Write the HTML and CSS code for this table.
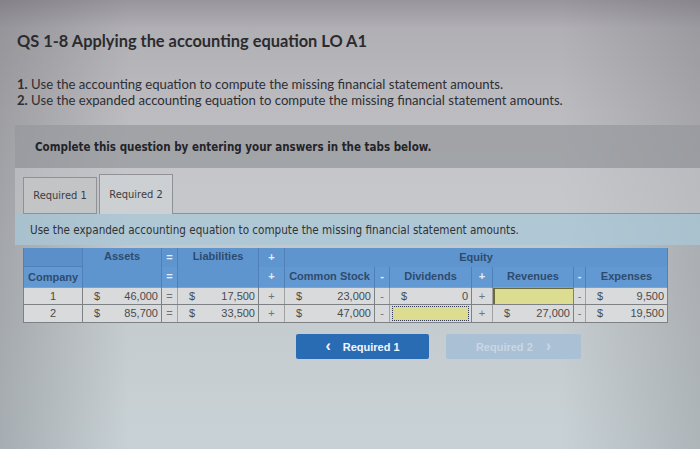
FILE: index.html
```html
<!DOCTYPE html>
<html>
<head>
<meta charset="utf-8">
<link rel="stylesheet" href="styles.css">
</head>
<body>
<div class="page">
  <h1 class="title">QS 1-8 Applying the accounting equation LO A1</h1>
  <div class="tasks">
    <div class="task"><b>1.</b> Use the accounting equation to compute the missing financial statement amounts.</div>
    <div class="task"><b>2.</b> Use the expanded accounting equation to compute the missing financial statement amounts.</div>
  </div>
  <div class="panel">
    <div class="prompt-bar">Complete this question by entering your answers in the tabs below.</div>
    <div class="tabs">
      <div class="tab">Required 1</div>
      <div class="tab active">Required 2</div>
      <div class="tab-fill"></div>
    </div>
    <div class="instr">Use the expanded accounting equation to compute the missing financial statement amounts.</div>
    <div class="table-area">
      <table class="eq">
        <colgroup>
          <col class="c-company"><col class="c-assets"><col class="c-op16"><col class="c-liab"><col class="c-op26">
          <col class="c-cs"><col class="c-op15"><col class="c-div"><col class="c-op21"><col class="c-rev"><col class="c-op12"><col class="c-exp">
        </colgroup>
        <thead>
          <tr class="h1">
            <th class="hc"></th>
            <th rowspan="2" class="top">Assets</th>
            <th class="op">=</th>
            <th rowspan="2" class="top">Liabilities</th>
            <th class="op">+</th>
            <th colspan="7" class="equity">Equity</th>
          </tr>
          <tr class="h2">
            <th class="company">Company</th>
            <th class="op">=</th>
            <th class="op">+</th>
            <th class="sub">Common Stock</th>
            <th class="op sub">-</th>
            <th class="sub">Dividends</th>
            <th class="op sub">+</th>
            <th class="sub">Revenues</th>
            <th class="op sub">-</th>
            <th class="sub">Expenses</th>
          </tr>
        </thead>
        <tbody>
          <tr class="r1">
            <td class="num">1</td>
            <td><span class="cur">$</span><span class="val">46,000</span></td>
            <td class="op">=</td>
            <td><span class="cur">$</span><span class="val">17,500</span></td>
            <td class="op">+</td>
            <td><span class="cur">$</span><span class="val">23,000</span></td>
            <td class="op">-</td>
            <td><span class="cur">$</span><span class="val">0</span></td>
            <td class="op">+</td>
            <td class="input"><div class="field"></div></td>
            <td class="op">-</td>
            <td><span class="cur">$</span><span class="val">9,500</span></td>
          </tr>
          <tr class="r2">
            <td class="num">2</td>
            <td><span class="cur">$</span><span class="val">85,700</span></td>
            <td class="op">=</td>
            <td><span class="cur">$</span><span class="val">33,500</span></td>
            <td class="op">+</td>
            <td><span class="cur">$</span><span class="val">47,000</span></td>
            <td class="op">-</td>
            <td class="input"><div class="field focus"></div></td>
            <td class="op">+</td>
            <td><span class="cur">$</span><span class="val">27,000</span></td>
            <td class="op">-</td>
            <td><span class="cur">$</span><span class="val">19,500</span></td>
          </tr>
        </tbody>
      </table>
      <div class="nav">
        <button class="btn prev"><span class="chev">&#8249;</span>Required 1</button>
        <button class="btn next" disabled>Required 2<span class="chev right">&#8250;</span></button>
      </div>
    </div>
  </div>
</div>
</body>
</html>
```
FILE: styles.css
```css
html, body {
  margin: 0;
  padding: 0;
}
body {
  width: 700px;
  height: 449px;
  overflow: hidden;
  background:
    linear-gradient(to right, rgba(80, 80, 86, 0.28) 0, rgba(80, 80, 86, 0) 130px, rgba(80, 80, 86, 0) 560px, rgba(80, 80, 86, 0.22) 700px),
    linear-gradient(to bottom, #98959c 0, #b0afb4 28px, #bcbcc0 110px, #c4c8cb 250px, #c8d2d6 449px);
  font-family: "Liberation Sans", Arial, sans-serif;
}
.page {
  padding-top: 31px;
}
.title {
  margin: 0 0 0 17px;
  font-family: Lato, "Open Sans", sans-serif;
  font-weight: 700;
  font-size: 16.4px;
  line-height: 20px;
  color: #2b2b2e;
}
.tasks {
  margin: 25px 0 0 17px;
  font-family: Lato, "Open Sans", sans-serif;
  font-size: 13.15px;
  line-height: 16px;
  color: #2e2e33;
}
.task b {
  font-weight: 700;
}
.panel {
  margin: 17px 0 0 15px;
}
.prompt-bar {
  height: 43px;
  background: rgba(150, 152, 156, 0.72);
  display: flex;
  align-items: center;
  padding-left: 20px;
  font-family: "DejaVu Sans Condensed", "DejaVu Sans", sans-serif;
  font-weight: 700;
  font-size: 11.5px;
  color: #242428;
}
.tabs {
  display: flex;
  align-items: flex-end;
  height: 46px;
  padding-left: 8px;
  background: rgba(200, 202, 205, 0.55);
}
.tab {
  height: 37px;
  width: 74px;
  box-sizing: border-box;
  border: 1px solid #8f9194;
  background: #c2c4c6;
  display: flex;
  align-items: center;
  justify-content: center;
  font-family: "DejaVu Sans Condensed", "DejaVu Sans", sans-serif;
  font-size: 11px;
  color: #3c3c40;
}
.tab.active {
  margin-left: 2px;
  height: 40px;
  border-bottom: none;
  background: #ccd0d2;
}
.tab-fill {
  flex: 1;
  border-bottom: 1px solid #8f9194;
}
.instr {
  height: 31px;
  display: flex;
  align-items: center;
  padding-left: 15px;
  background: rgba(170, 200, 216, 0.75);
  font-family: "DejaVu Sans Condensed", "DejaVu Sans", sans-serif;
  font-size: 11.6px;
  color: #303236;
}
.table-area {
  padding: 3px 0 0 8px;
}
.eq {
  border-collapse: collapse;
  table-layout: fixed;
  width: 644px;
  font-family: "Liberation Sans", Arial, sans-serif;
}
.c-company { width: 59px; }
.c-assets { width: 79px; }
.c-op16 { width: 16px; }
.c-liab { width: 81px; }
.c-op26 { width: 26px; }
.c-cs { width: 90px; }
.c-op15 { width: 15px; }
.c-div { width: 82px; }
.c-op21 { width: 21px; }
.c-rev { width: 81px; }
.c-op12 { width: 12px; }
.c-exp { width: 82px; }
.eq th {
  background: #5f95cf;
  color: #2e4b6d;
  font-weight: 700;
  font-size: 11px;
  line-height: 13px;
  padding: 0;
  border-left: 1px solid #4f80b8;
  border-right: 1px solid #4f80b8;
  white-space: nowrap;
}
.eq .h1 th {
  height: 18px;
  vertical-align: middle;
}
.eq .h1 th.top {
  vertical-align: top;
  padding-top: 2px;
}
.eq .h1 th.hc {
  background: #5b8fca;
  border-bottom: 1px solid #4f80b8;
}
.eq .h1 th.equity {
  border-left: none;
  vertical-align: middle;
}
.eq .h2 th {
  height: 20px;
  background: #6399d2;
  vertical-align: middle;
}
.eq .h2 th.company {
  text-align: left;
  padding-left: 4px;
}
.eq th.op {
  font-size: 11px;
  color: #e6eef8;
}
.eq td {
  background: #d8dadb;
  border: 1px solid #7e8184;
  border-top-color: #9a9c9e;
  font-size: 11px;
  line-height: 13px;
  color: #4a4b4e;
  padding: 0 3px 0 0;
  height: 16px;
  white-space: nowrap;
}
.eq td .cur {
  float: left;
  padding-left: 11px;
}
.eq td .val {
  float: right;
}
.eq td.num {
  text-align: center;
  padding: 0;
}
.eq td.op {
  text-align: center;
  padding: 0;
  color: #707275;
  border-left-color: #9fa1a3;
  border-right-color: #9fa1a3;
}
.eq td.input {
  padding: 0;
}
.field {
  height: 16px;
  background: #dddd92;
  border-top: 1px solid #6b6a3a;
  border-left: 2px solid #6b6a3a;
  box-sizing: border-box;
}
.field.focus {
  margin: 1px 2px;
  height: 15px;
  border: 1px dotted #333a55;
}
.nav {
  display: flex;
  gap: 17px;
  margin: 11px 0 0 273px;
}
.btn {
  height: 25px;
  border: none;
  border-radius: 2px;
  font-family: "Liberation Sans", Arial, sans-serif;
  font-weight: 700;
  font-size: 11px;
  display: flex;
  align-items: center;
  justify-content: center;
  padding: 0;
}
.btn.prev {
  width: 133px;
  background: #2a6cb4;
  color: #f2f6fb;
}
.btn.next {
  width: 135px;
  background: #a9c0d5;
  color: #c9d7e4;
}
.chev {
  font-size: 16px;
  line-height: 1;
  margin-right: 12px;
  position: relative;
  top: -1px;
}
.chev.right {
  margin: 0 0 0 13px;
}
```
